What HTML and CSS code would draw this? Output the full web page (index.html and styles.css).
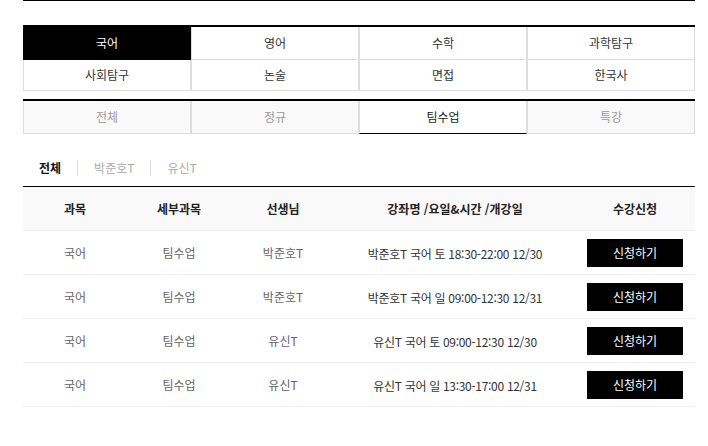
FILE: index.html
```html
<!DOCTYPE html>
<html lang="ko">
<head>
<meta charset="utf-8">
<title>수강신청</title>
<link rel="stylesheet" href="styles.css">
</head>
<body>
<div class="wrap">
  <div class="topline"></div>

  <ul class="subjects">
    <li class="on">국어</li>
    <li>영어</li>
    <li>수학</li>
    <li>과학탐구</li>
    <li>사회탐구</li>
    <li>논술</li>
    <li>면접</li>
    <li>한국사</li>
  </ul>

  <ul class="types">
    <li>전체</li>
    <li>정규</li>
    <li class="on">팀수업</li>
    <li>특강</li>
  </ul>

  <ul class="teachers">
    <li class="on">전체</li>
    <li>박준호T</li>
    <li>유신T</li>
  </ul>

  <table class="list">
    <colgroup>
      <col class="c1"><col class="c2"><col class="c3"><col class="c4"><col class="c5">
    </colgroup>
    <thead>
      <tr><th>과목</th><th>세부과목</th><th>선생님</th><th>강좌명 /요일&amp;시간 /개강일</th><th>수강신청</th></tr>
    </thead>
    <tbody>
      <tr><td>국어</td><td>팀수업</td><td>박준호T</td><td class="name">박준호T 국어 토 18:30-22:00 12/30</td><td><button class="apply">신청하기</button></td></tr>
      <tr><td>국어</td><td>팀수업</td><td>박준호T</td><td class="name">박준호T 국어 일 09:00-12:30 12/31</td><td><button class="apply">신청하기</button></td></tr>
      <tr><td>국어</td><td>팀수업</td><td>유신T</td><td class="name">유신T 국어 토 09:00-12:30 12/30</td><td><button class="apply">신청하기</button></td></tr>
      <tr><td>국어</td><td>팀수업</td><td>유신T</td><td class="name">유신T 국어 일 13:30-17:00 12/31</td><td><button class="apply">신청하기</button></td></tr>
    </tbody>
  </table>
</div>
</body>
</html>
```
FILE: styles.css
```css
* { box-sizing: border-box; }
html, body { margin: 0; padding: 0; background: #fff; }
body {
  font-family: "Noto Sans CJK KR", "Noto Sans", sans-serif;
  font-size: 12px;
  color: #333;
}
ul { list-style: none; margin: 0; padding: 0; }

.wrap {
  width: 672px;
  margin-left: 23px;
}
.topline {
  height: 1px;
  background: #000;
}

.subjects {
  margin-top: 24px;
  border-top: 2px solid #000;
  display: grid;
  grid-template-columns: repeat(4, 1fr);
  grid-template-rows: 33px 31px;
}
.subjects li {
  display: flex;
  align-items: center;
  justify-content: center;
  border-left: 1px solid #ddd;
  border-right: 1px solid #ddd;
  border-bottom: 1px solid #ddd;
  color: #333;
  line-height: 1;
  padding-bottom: 1px;
}
.subjects li.on {
  background: #000;
  color: #fff;
  border-color: #000;
}

.types {
  margin-top: 8px;
  border-top: 2px solid #000;
  display: grid;
  grid-template-columns: repeat(4, 1fr);
  height: 35px;
}
.types li {
  display: flex;
  align-items: center;
  justify-content: center;
  background: #f9f9f9;
  color: #999;
  border-left: 1px solid #ddd;
  border-right: 1px solid #ddd;
  border-bottom: 1px solid #ddd;
  line-height: 1;
  padding-bottom: 1px;
}
.types li.on {
  background: #fff;
  color: #222;
  border-bottom-color: #000;
}

.teachers {
  display: flex;
  align-items: center;
  margin-top: 25px;
  height: 18px;
}
.teachers li {
  color: #aaa;
  line-height: 1;
  padding: 0 16px;
  border-left: 1px solid #ddd;
  height: 16px;
  display: flex;
  align-items: center;
}
.teachers li:first-child {
  border-left: 0;
}
.teachers li.on { color: #111; font-weight: bold; }

.list {
  margin-top: 9px;
  width: 672px;
  border-collapse: collapse;
  table-layout: fixed;
  border-top: 1px solid #000;
}
.list col.c1 { width: 104px; }
.list col.c2 { width: 104px; }
.list col.c3 { width: 104px; }
.list col.c4 { width: 240px; }
.list col.c5 { width: 120px; }
.list th {
  height: 44px;
  background: #f9f9f9;
  border-bottom: 1px solid #eee;
  font-weight: bold;
  color: #222;
  padding: 0;
  text-align: center;
  line-height: 1;
}
.list td {
  height: 44px;
  border-bottom: 1px solid #eee;
  padding: 0;
  text-align: center;
  color: #666;
  line-height: 1;
}
.list td.name {
  color: #333;
  padding-top: 2px;
  letter-spacing: -0.3px;
}
.apply {
  display: inline-block;
  width: 96px;
  height: 28px;
  background: #000;
  color: #fff;
  border: 0;
  font-family: "Noto Sans CJK KR", "Noto Sans", sans-serif;
  font-size: 12px;
  line-height: 1;
  padding: 0;
  vertical-align: middle;
}
```
